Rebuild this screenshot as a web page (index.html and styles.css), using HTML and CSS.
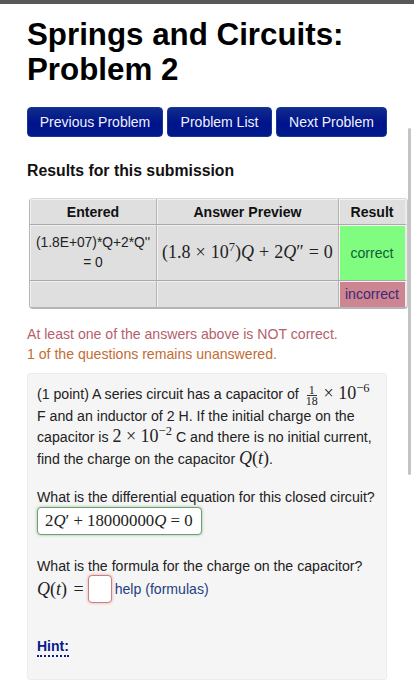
FILE: index.html
```html
<!DOCTYPE html>
<html lang="en">
<head>
<meta charset="utf-8">
<title>Springs and Circuits: Problem 2</title>
<link rel="stylesheet" href="styles.css">
</head>
<body>
<div class="topbar"></div>
<div class="scrollbar"></div>
<main class="content">
  <h1 class="title">Springs and Circuits: Problem 2</h1>
  <nav class="buttons">
    <a class="btn btn-prev">Previous Problem</a>
    <a class="btn btn-list">Problem List</a>
    <a class="btn btn-next">Next Problem</a>
  </nav>
  <h2 class="results-heading">Results for this submission</h2>
  <div class="table-wrap">
    <table class="results">
      <colgroup><col class="c1"><col class="c2"><col class="c3"></colgroup>
      <tr class="r-head"><th>Entered</th><th>Answer Preview</th><th>Result</th></tr>
      <tr class="r-main">
        <td class="entered">(1.8E+07)*Q+2*Q''<br>= 0</td>
        <td class="preview math">(1.8 × 10<sup>7</sup>)<i>Q</i> + 2<i>Q</i>″ = 0</td>
        <td class="ok">correct</td>
      </tr>
      <tr class="r-last"><td></td><td></td><td class="bad">incorrect</td></tr>
    </table>
  </div>
  <p class="msg msg-wrong">At least one of the answers above is NOT correct.</p>
  <p class="msg msg-open">1 of the questions remains unanswered.</p>
  <section class="problem">
    <p class="para">(1 point) A series circuit has a capacitor of <span class="frac math"><span class="num">1</span><span class="den">18</span></span> <span class="math m-lg">× 10<sup>−6</sup></span> F and an inductor of 2 H. If the initial charge on the capacitor is <span class="math m-lg">2 × 10<sup>−2</sup></span> C and there is no initial current, find the charge on the capacitor <span class="math m-lg"><i>Q</i>(<i>t</i>)</span>.</p>
    <p class="q q-first">What is the differential equation for this closed circuit?</p>
    <div class="answer-ok math">2<i>Q</i>′ + 18000000<i>Q</i> = 0</div>
    <p class="q q-second">What is the formula for the charge on the capacitor?</p>
    <div class="formula-row">
      <span class="math m-lg m-formula"><i>Q</i>(<i>t</i>) =</span>
      <span class="answer-empty"></span>
      <a class="help">help (formulas)</a>
    </div>
    <a class="hint">Hint:</a>
  </section>
</main>
</body>
</html>
```
FILE: styles.css
```css
* { box-sizing: border-box; }
html, body { margin: 0; padding: 0; }
body {
  width: 414px;
  height: 700px;
  overflow: hidden;
  position: relative;
  background: #fff;
  color: #111;
  font-family: "Liberation Sans", Arial, sans-serif;
  font-size: 14px;
}
.topbar { height: 4px; background: #585858; }
.scrollbar {
  position: absolute;
  left: 408px;
  top: 128px;
  width: 3px;
  height: 347px;
  background: #c4c4c4;
  border-radius: 2px;
}
.content { padding: 0 0 0 27px; }
.title {
  margin: 13px 0 0;
  width: 340px;
  font-size: 31.3px;
  line-height: 35px;
  font-weight: 700;
  color: #000;
}
.buttons { display: flex; gap: 4px; margin-top: 20px; }
.btn {
  height: 30px;
  display: flex;
  align-items: center;
  justify-content: center;
  border-radius: 4px;
  color: #eef1fb;
  font-size: 14px;
  background: linear-gradient(#102c8c, #00138a 55%, #001a8c);
  border: 1px solid #1a3596;
}
.btn-prev { width: 136px; }
.btn-list { width: 105px; }
.btn-next { width: 111px; }
.results-heading {
  margin: 24px 0 0;
  font-size: 15.8px;
  line-height: 20px;
  font-weight: 700;
  color: #111;
}
.table-wrap {
  margin: 17px 0 0 2px;
  width: 379px;
  border-radius: 4px;
  overflow: hidden;
  border: 1px solid #b5b5b5;
  border-top-color: #d8d8d8;
  border-right-color: #c8c8c8;
  border-bottom-width: 2px;
}
.results {
  border-collapse: separate;
  border-spacing: 0;
  table-layout: fixed;
  width: 100%;
  background: #dfdfdf;
}
.c1 { width: 127px; }
.c2 { width: 182px; }
.c3 { width: 68px; }
.results th, .results td {
  padding: 0;
  text-align: center;
  border-right: 1px solid #b5b5b5;
  border-bottom: 1px solid #a9a9a9;
  box-shadow: inset 1px 1px 0 #f2f2f2;
}
.results tr:last-child td { border-bottom: 0; }
.results th:last-child, .results td:last-child { border-right: 2px solid #ececec; }
.r-head { height: 26px; }
.r-head th { font-size: 14.1px; font-weight: 700; color: #111; }
.r-main { height: 56px; }
.r-last { height: 26px; }
.entered { font-size: 13.8px; line-height: 20px; color: #222; }
.math { font-family: "Liberation Serif", "Times New Roman", serif; }
.math i { font-style: italic; }
.math sup { font-size: 0.7em; line-height: 0; vertical-align: 0.55em; }
.preview { font-size: 18px; word-spacing: 0.5px; color: #222; white-space: nowrap; }
.results .ok { background: #80fc80; color: #0f5f3a; font-size: 14.1px; }
.results .bad { background: #cd8591; color: #3b2a75; font-size: 14.1px; }
.msg { margin: 0; font-size: 14.1px; line-height: 20px; }
.msg-wrong { margin-top: 15px; color: #b6606c; }
.msg-open { color: #bf6d35; }
.problem {
  width: 360px;
  height: 307px;
  margin: 9px 0 0 0;
  padding: 9px 8px 0 9px;
  background: #f5f5f5;
  border: 1px solid #ececec;
  border-radius: 3px;
  color: #222;
  overflow: hidden;
}
.para, .q { margin: 0; font-size: 14.15px; line-height: 20.5px; }
.m-lg { font-size: 18px; }
.frac {
  display: inline-flex;
  flex-direction: column;
  align-items: center;
  vertical-align: middle;
  font-size: 12px;
  line-height: 10px;
  margin: 0 2px 0 3px;
}
.frac .num { border-bottom: 1px solid #333; padding: 0 2px; }
.q-first { margin-top: 18px; }
.answer-ok {
  width: 165px;
  height: 28px;
  margin-top: -1px;
  border: 1px solid #6f9f75;
  border-radius: 4px;
  background: #fff;
  box-shadow: 0 0 3px rgba(70, 140, 80, 0.55);
  font-size: 16.8px;
  line-height: 26px;
  padding-left: 7px;
  white-space: nowrap;
}
.q-second { margin-top: 21px; }
.formula-row { display: flex; align-items: center; margin-top: -1px; height: 28px; }
.m-formula { word-spacing: 2px; }
.answer-empty {
  width: 24px;
  height: 28px;
  margin: 0 3px 0 4px;
  background: #fff;
  border: 1px solid #c98080;
  border-radius: 4px;
  box-shadow: 0 0 3px rgba(220, 90, 90, 0.55);
}
.help { color: #1f3f80; font-size: 14.1px; }
.hint {
  display: inline-block;
  margin-top: 35px;
  color: #0b1a8f;
  font-weight: 700;
  font-size: 14px;
  line-height: 17px;
  border-bottom: 2px dotted #0b1a8f;
}
```
